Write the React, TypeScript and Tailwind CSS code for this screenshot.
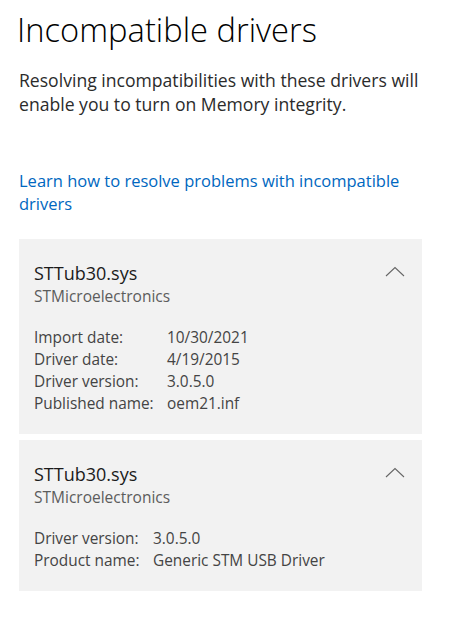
import * as React from 'react';

type Row = [string, string];

interface DriverCardProps {
  name: string;
  vendor: string;
  rows: Row[];
  labelWidth: string;
}

function ChevronUp() {
  return (
    <svg width="20" height="11" viewBox="0 0 20 11" className="shrink-0">
      <path d="M1 10 L10 1.5 L19 10" fill="none" stroke="#666666" strokeWidth="1.1" />
    </svg>
  );
}

function DriverCard({ name, vendor, rows, labelWidth }: DriverCardProps) {
  return (
    <div className="bg-[#f2f2f2] pl-[15px] pr-[17px] pt-[22px] pb-[19px]">
      <div className="flex items-start justify-between">
        <div>
          <div className="text-[18px] leading-[24px] text-[#1b1b1b]">{name}</div>
          <div className="text-[15.5px] leading-[22px] text-[#5c5c5c]">{vendor}</div>
        </div>
        <div className="pt-[5px]">
          <ChevronUp />
        </div>
      </div>
      <div className="mt-[20px] text-[15.4px] leading-[22px] text-[#444444]">
        {rows.map(([label, value]) => (
          <div key={label} className="flex">
            <span className={labelWidth}>{label}</span>
            <span>{value}</span>
          </div>
        ))}
      </div>
    </div>
  );
}

export default function App() {
  return (
    <div
      className="w-[449px] h-[632px] bg-white px-[19px] pt-[9px]"
      style={{ fontFamily: '"Open Sans", "Noto Sans", sans-serif' }}
    >
      <h1 className="-ml-[2px] text-[32.7px] leading-[42px] font-light text-black">Incompatible drivers</h1>
      <p className="mt-[17px] text-[17.6px] leading-[24px] text-[#2b2b2b]">
        Resolving incompatibilities with these drivers will enable you to turn on Memory integrity.
      </p>
      <a href="#" className="block mt-[53px] text-[16.5px] leading-[23px] text-[#0067c0] pr-[20px]">
        Learn how to resolve problems with incompatible drivers
      </a>
      <div className="mt-[24px] w-[403px] flex flex-col gap-[6px]">
        <DriverCard
          name="STTub30.sys"
          vendor="STMicroelectronics"
          labelWidth="w-[133px]"
          rows={[
            ['Import date:', '10/30/2021'],
            ['Driver date:', '4/19/2015'],
            ['Driver version:', '3.0.5.0'],
            ['Published name:', 'oem21.inf'],
          ]}
        />
        <DriverCard
          name="STTub30.sys"
          vendor="STMicroelectronics"
          labelWidth="w-[119px]"
          rows={[
            ['Driver version:', '3.0.5.0'],
            ['Product name:', 'Generic STM USB Driver'],
          ]}
        />
      </div>
    </div>
  );
}
